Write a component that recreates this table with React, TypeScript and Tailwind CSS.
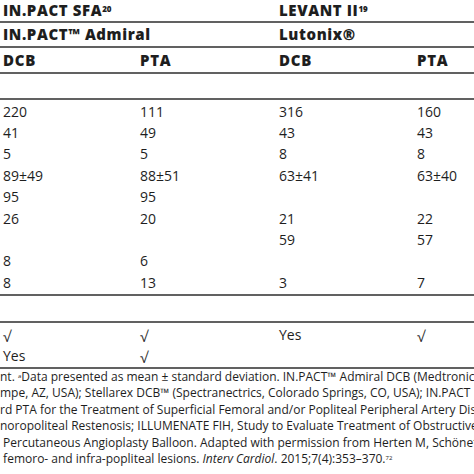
const font = { fontFamily: "'Open Sans', Lato, sans-serif" };

const rows: string[][] = [
  ["220", "111", "316", "160"],
  ["41", "49", "43", "43"],
  ["5", "5", "8", "8"],
  ["89±49", "88±51", "63±41", "63±40"],
  ["95", "95", "", ""],
  ["26", "20", "21", "22"],
  ["", "", "59", "57"],
  ["8", "6", "", ""],
  ["8", "13", "3", "7"],
];

const Rule = () => <div className="h-[2px] bg-[#616161]" />;

function Row({ cells, h, bold }: { cells: string[]; h: string; bold?: boolean }) {
  return (
    <div className={`grid grid-cols-[137px_139px_138px_1fr] items-center ${h} ${bold ? "font-extrabold text-[15px] tracking-[0.05em]" : ""}`}>
      {cells.map((c, i) => (
        <div key={i} className="pl-[3px] whitespace-nowrap">
          {c === "√" ? <span className="inline-block translate-y-[2px] text-[15px] text-[#333]">√</span> : c}
        </div>
      ))}
    </div>
  );
}

const notes = [
  <>nt. <sup className="text-[6px]">a</sup>Data presented as mean ± standard deviation. IN.PACT™ Admiral DCB (Medtronic</>,
  <>mpe, AZ, USA); Stellarex DCB™ (Spectranectrics, Colorado Springs, CO, USA); IN.PACT</>,
  <>rd PTA for the Treatment of Superficial Femoral and/or Popliteal Peripheral Artery Disease</>,
  <>noropoliteal Restenosis; ILLUMENATE FIH, Study to Evaluate Treatment of Obstructive</>,
  <>&nbsp;Percutaneous Angioplasty Balloon. Adapted with permission from Herten M, Schönefeld</>,
  <>&nbsp;femoro- and infra-popliteal lesions. <i>Interv Cardiol</i>. 2015;7(4):353–370.<sup className="text-[6px]">72</sup></>,
];

export default function App() {
  return (
    <div className="w-[474px] h-[474px] overflow-hidden bg-white text-[#1e1e1e] text-[14px] leading-none" style={font}>
      <div className="grid grid-cols-[276px_1fr] items-center h-[21px] font-extrabold text-[15px] tracking-[0.04em]">
        <div className="pl-[3px]">IN.PACT SFA<sup className="text-[8px] tracking-normal">20</sup></div>
        <div className="pl-[3px]">LEVANT II<sup className="text-[8px] tracking-normal">19</sup></div>
      </div>
      <Rule />
      <div className="grid grid-cols-[276px_1fr] items-center h-[23px] font-extrabold text-[15px] tracking-[0.04em]">
        <div className="pl-[3px]">IN.PACT™ Admiral</div>
        <div className="pl-[3px]">Lutonix®</div>
      </div>
      <Rule />
      <Row cells={["DCB", "PTA", "DCB", "PTA"]} h="h-[24px]" bold />
      <Rule />
      <div className="h-[24px]" />
      <Rule />
      <div className="pt-[1px]">
        {rows.map((r, i) => (
          <Row key={i} cells={r} h="h-[21.4px]" />
        ))}
      </div>
      <Rule />
      <div className="h-[25px]" />
      <Rule />
      <Row cells={["√", "√", "Yes", "√"]} h="h-[22px] pt-[2px]" />
      <Row cells={["Yes", "√", "", ""]} h="h-[22px]" />
      <Rule />
      <div className="text-[12px] leading-[16.6px]">
        {notes.map((n, i) => (
          <div key={i} className="whitespace-nowrap overflow-hidden">{n}</div>
        ))}
      </div>
    </div>
  );
}
